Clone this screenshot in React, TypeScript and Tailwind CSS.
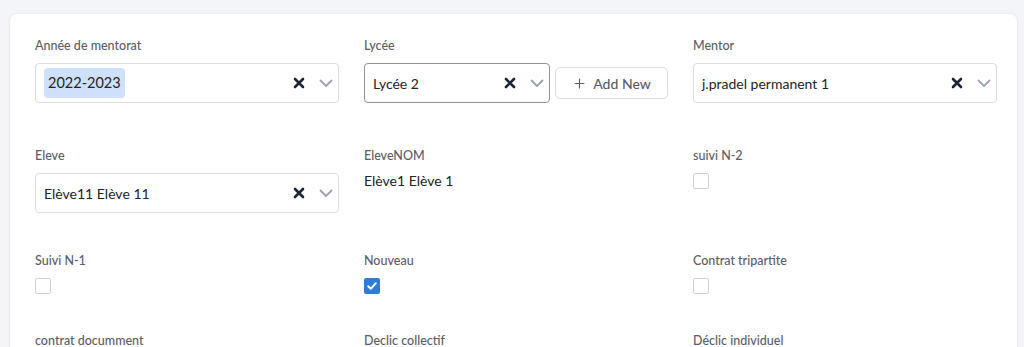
import { Plus } from "lucide-react";

const font = { fontFamily: "Lato, 'Open Sans', sans-serif" };

function XIcon() {
  return (
    <svg width="12" height="12" viewBox="0 0 12 12" aria-hidden="true">
      <path d="M2 2 L10 10 M10 2 L2 10" stroke="#1c2536" strokeWidth="2.6" strokeLinecap="round" />
    </svg>
  );
}

function Chevron() {
  return (
    <svg width="14" height="9" viewBox="0 0 14 9" aria-hidden="true">
      <path d="M1.5 1.5 L7 7 L12.5 1.5" stroke="#9aa2ad" strokeWidth="1.8" fill="none" strokeLinecap="round" strokeLinejoin="round" />
    </svg>
  );
}

function Label({ children }: { children: React.ReactNode }) {
  return <div className="mb-[9px] h-4 text-[12.5px] leading-4 font-medium text-[#5b5d66]">{children}</div>;
}

function Select({
  value,
  chip,
  focused,
  className = "",
}: {
  value: string;
  chip?: boolean;
  focused?: boolean;
  className?: string;
}) {
  return (
    <div
      className={`flex h-10 items-center rounded-[4px] border bg-white pr-[5px] ${
        focused ? "border-[#8f9196]" : "border-[#dcdde0]"
      } ${className}`}
    >
      <div className="flex-1 pl-[8px]">
        {chip ? (
          <span className="inline-flex h-[30px] items-center rounded-[4px] bg-[#cfe0fc] px-[4px] text-[14.5px] text-[#232323]">
            {value}
          </span>
        ) : (
          <span className="text-[14px] text-[#232323]">{value}</span>
        )}
      </div>
      <span className="flex w-[13px] justify-center">
        <XIcon />
      </span>
      <span className="ml-[14px] flex justify-center">
        <Chevron />
      </span>
    </div>
  );
}

function Check({ checked }: { checked?: boolean }) {
  return checked ? (
    <div className="flex h-[16px] w-[16px] items-center justify-center rounded-[2px] bg-[#2f7bd6]">
      <svg width="12" height="12" viewBox="0 0 12 12" aria-hidden="true">
        <path d="M2.2 6.3 L4.8 8.8 L9.8 3.2" stroke="white" strokeWidth="2" fill="none" strokeLinecap="round" strokeLinejoin="round" />
      </svg>
    </div>
  ) : (
    <div className="h-[16px] w-[16px] rounded-[2px] border border-[#cfd0d3] bg-white" />
  );
}

export default function App() {
  return (
    <main className="h-[347px] overflow-hidden bg-[#f4f5f9] pt-[14px] pl-[10px] pr-[7px]" style={font}>
      <div className="rounded-[7px] bg-white pt-[24px] pl-[25px] shadow-[0_0_3px_rgba(0,0,0,0.1)]">
        <div className="grid grid-cols-[304px_304px_304px] gap-x-[25px]">
          <div className="mb-[45px]">
            <Label>Année de mentorat</Label>
            <Select value="2022-2023" chip />
          </div>
          <div className="mb-[45px]">
            <Label>Lycée</Label>
            <div className="flex items-center gap-[5px]">
              <Select value="Lycée 2" focused className="w-[186px]" />
              <button className="flex h-[32px] w-[113px] items-center justify-center gap-[6px] rounded-[5px] border border-[#dcdde0] bg-white text-[14px] font-medium text-[#5a5c63]">
                <Plus size={15} strokeWidth={1.8} />
                Add New
              </button>
            </div>
          </div>
          <div className="mb-[45px]">
            <Label>Mentor</Label>
            <Select value="j.pradel permanent 1" />
          </div>

          <div className="mb-[40px]">
            <Label>Eleve</Label>
            <Select value="Elève11 Elève 11" />
          </div>
          <div className="mb-[40px]">
            <Label>EleveNOM</Label>
            <div className="mt-[1px] text-[14px] leading-4 text-[#232323]">Elève1 Elève 1</div>
          </div>
          <div className="mb-[40px]">
            <Label>suivi N-2</Label>
            <Check />
          </div>

          <div className="mb-[39px]">
            <Label>Suivi N-1</Label>
            <Check />
          </div>
          <div className="mb-[39px]">
            <Label>Nouveau</Label>
            <Check checked />
          </div>
          <div className="mb-[39px]">
            <Label>Contrat tripartite</Label>
            <Check />
          </div>

          <div>
            <Label>contrat documment</Label>
          </div>
          <div>
            <Label>Declic collectif</Label>
          </div>
          <div>
            <Label>Déclic individuel</Label>
          </div>
        </div>
      </div>
    </main>
  );
}
